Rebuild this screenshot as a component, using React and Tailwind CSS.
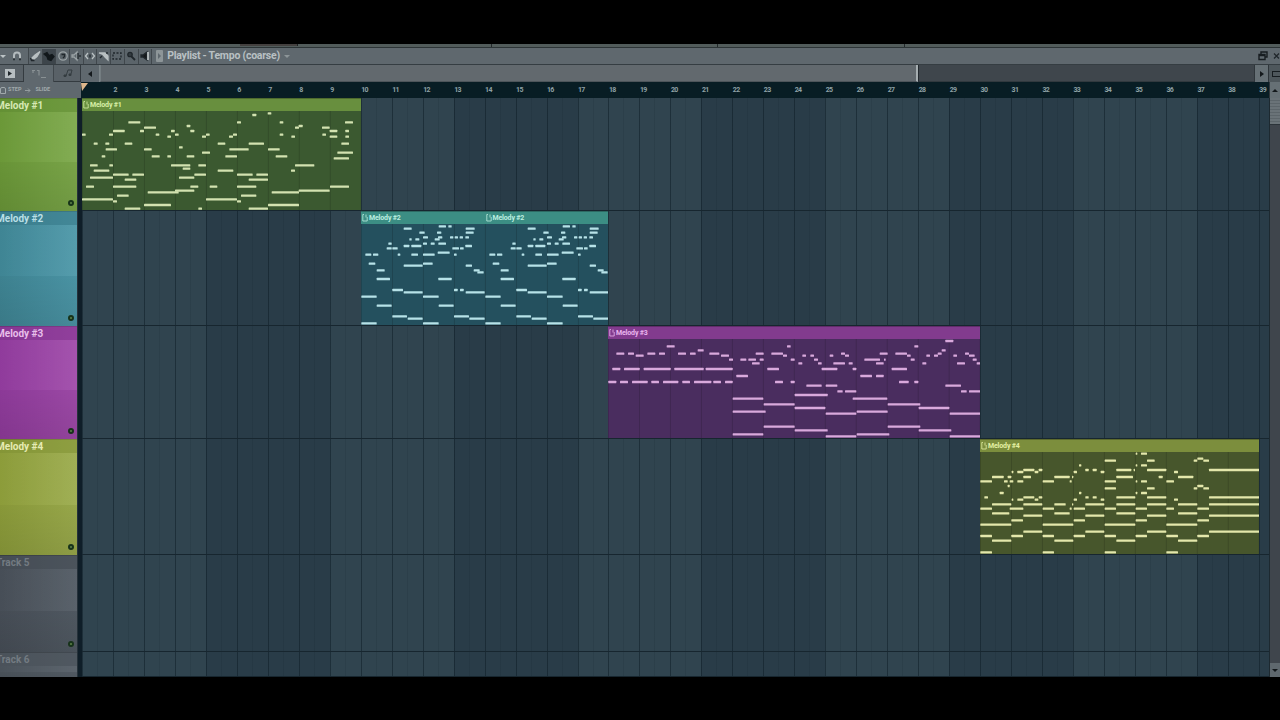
import { clsx } from 'clsx';

// Note rows are [y, start, end, start, end, ...] in thirds of a pixel
const MELODY_1 = [
  [52, 563, 574],
  [57, 517, 529],
  [79, 145, 181, 471, 483, 599, 610, 795, 819],
  [90, 320, 331, 656, 668],
  [95, 192, 228, 645, 657, 726, 749],
  [105, 99, 134, 180, 192, 273, 284, 331, 343, 749, 772, 796, 807],
  [116, 6, 17, 87, 99, 227, 238, 285, 296, 378, 389, 459, 471, 599, 610, 727, 738],
  [122, 262, 273, 366, 378, 447, 459, 634, 645, 749, 772, 796, 807],
  [143, 41, 53, 76, 88, 134, 157, 413, 436, 506, 552, 784, 807],
  [154, 297, 308],
  [160, 77, 111, 192, 215, 448, 506, 564, 599],
  [170, 366, 390, 772, 819],
  [181, 65, 76, 215, 239, 262, 273, 320, 343, 436, 471, 587, 622],
  [187, 761, 807],
  [208, 30, 53, 88, 99, 273, 331, 355, 378, 645, 703],
  [218, 308, 331],
  [224, 41, 88, 413, 460, 633, 645],
  [236, 99, 146, 157, 192, 343, 378, 471, 518, 529, 564],
  [245, 30, 99, 297, 343],
  [251, 134, 169, 506, 564],
  [272, 18, 42, 99, 169, 331, 355, 389, 412, 471, 529, 750, 807],
  [284, 285, 343, 656, 749],
  [289, 203, 296, 575, 657],
  [299, 111, 146, 483, 529],
  [310, 6, 99, 378, 471],
  [316, 99, 111, 471, 483],
  [327, 192, 273, 564, 657],
  [338, 134, 181, 355, 366, 506, 564],
];

const MELODY_2 = [
  [55, 242, 264, 271, 281],
  [62, 137, 161, 323, 350],
  [74, 184, 200, 237, 250, 323, 347],
  [88, 195, 210, 240, 253, 276, 286, 290, 300, 305, 315, 322, 333],
  [94, 154, 161, 172, 184, 230, 245],
  [107, 91, 101, 195, 207, 218, 230, 241, 264],
  [114, 137, 154, 160, 190, 322, 342],
  [121, 86, 101, 103, 119, 283, 303, 306, 317],
  [134, 239, 275],
  [140, 22, 40, 45, 61, 119, 127, 160, 180, 195, 230, 288, 296],
  [167, 32, 52, 195, 224],
  [173, 137, 194, 323, 342],
  [187, 56, 80, 347, 365],
  [193, 358, 377],
  [213, 56, 96, 241, 281],
  [246, 103, 135, 288, 299, 306, 317],
  [253, 137, 194, 323, 380],
  [266, 10, 56, 195, 242],
  [293, 56, 101, 242, 287],
  [325, 103, 147, 288, 333],
  [332, 149, 194, 334, 380],
  [346, 10, 56, 195, 242],
];

const MELODY_3 = [
  [57, 1024, 1048],
  [73, 188, 212, 549, 560, 931, 943],
  [85, 281, 299, 1013, 1025],
  [95, 37, 61, 72, 90, 130, 154, 165, 183, 222, 246, 258, 275, 316, 346, 455, 479, 502, 537, 711, 723, 827, 851, 874, 909, 1001, 1013, 1083, 1095],
  [101, 95, 119, 351, 375, 537, 549, 595, 606, 619, 630, 677, 688, 723, 735, 909, 920, 967, 978, 990, 1002, 1048, 1059, 1095, 1112],
  [113, 375, 387, 409, 427, 433, 456, 467, 479, 560, 572, 630, 642, 781, 828, 840, 845, 920, 932, 1106, 1118],
  [124, 444, 467, 583, 595, 642, 653, 688, 723, 734, 746, 816, 839, 955, 967, 1059, 1083, 1118, 1129],
  [141, 25, 49, 60, 107, 119, 200, 211, 299, 305, 386, 490, 525, 653, 700, 746, 757, 863, 909],
  [162, 397, 432, 769, 804, 816, 839],
  [180, 13, 37, 48, 72, 84, 131, 142, 165, 177, 223, 235, 258, 270, 322, 328, 351, 363, 386, 513, 537, 560, 572, 885, 914, 931, 943],
  [191, 607, 653, 665, 700, 1024, 1071],
  [208, 700, 716, 723, 757, 1071, 1088, 1095, 1129],
  [219, 572, 671],
  [230, 386, 478, 746, 850],
  [247, 479, 572, 851, 949],
  [258, 572, 664, 944, 1036],
  [269, 386, 485, 758, 851],
  [275, 665, 757, 1037, 1129],
  [314, 479, 572, 851, 949],
  [325, 572, 671, 944, 1042],
  [337, 386, 478, 758, 856],
  [343, 665, 757, 1037, 1129],
];

const MELODY_4 = [
  [53, 479, 484, 495, 513],
  [68, 664, 682],
  [74, 386, 420, 653, 664, 682, 699],
  [88, 309, 316, 479, 484, 495, 513],
  [74, 513, 536],
  [102, 142, 175, 188, 199, 328, 338, 350, 362, 421, 466, 473, 477, 513, 571, 699, 850],
  [108, 107, 112, 124, 142, 176, 187, 293, 303, 374, 385, 594, 606],
  [123, 48, 83, 95, 106, 142, 165, 235, 281, 288, 292, 421, 471, 548, 560, 606, 652],
  [136, 13, 48, 84, 95, 101, 112, 124, 142, 200, 234, 281, 287, 386, 420, 479, 484, 495, 513, 571, 594],
  [150, 95, 101],
  [157, 386, 420, 513, 536, 653, 664, 682, 699],
  [150, 664, 682],
  [171, 71, 83, 309, 316, 479, 484, 495, 513],
  [184, 25, 36, 142, 175, 188, 199, 328, 338, 350, 362, 421, 478, 513, 571, 699, 850],
  [191, 107, 112, 124, 142, 176, 187, 293, 303, 374, 385, 594, 606],
  [205, 48, 106, 142, 199, 235, 269, 288, 292, 328, 385, 421, 478, 513, 571, 606, 664, 699, 850],
  [218, 13, 48, 101, 142, 200, 234, 281, 287, 293, 327, 386, 420, 479, 513, 571, 594, 664, 699],
  [232, 48, 100, 235, 281, 421, 478, 606, 664],
  [239, 142, 199, 328, 385, 513, 571, 699, 850],
  [253, 106, 141, 293, 327, 479, 513, 664, 699],
  [266, 13, 106, 200, 292, 386, 478, 571, 664],
  [287, 142, 199, 328, 385, 513, 571, 699, 850],
  [300, 13, 48, 106, 141, 200, 234, 293, 327, 386, 420, 479, 513, 571, 606, 664, 699],
  [314, 48, 106, 235, 292, 421, 478, 606, 664],
  [349, 13, 48, 200, 234, 386, 420, 571, 606],
];

const tracks = [
  {
    name: 'Melody #1',
    height: 'h-[113px]',
    header: 'from-[#6b9838] to-[#7ca84a] text-[#d6e8b4]',
    light: 'bg-[#5b8530]',
    clips: [
      { label: 'Melody #1', className: 'w-[279px] ml-0', bar: 'bg-[#688f3e] text-[#d8efa8]', body: 'bg-[#3b5930] fill-[#d3e2b0]', viewBox: '6 45 837 297', notes: MELODY_1 },
    ],
  },
  {
    name: 'Melody #2',
    height: 'h-[115px]',
    header: 'from-[#3f8594] to-[#4c97a8] text-[#b9dfe6]',
    light: 'bg-[#35717f]',
    clips: [
      { label: 'Melody #2', className: 'w-[123.5px] ml-[279px]', bar: 'bg-[#3c8e84] text-[#bdeee0]', body: 'bg-[#24505e] fill-[#b7e2e8]', viewBox: '9 48 370.5 303', notes: MELODY_2 },
      { label: 'Melody #2', className: 'w-[123.5px] ml-0', bar: 'bg-[#3c8e84] text-[#bdeee0]', body: 'bg-[#24505e] fill-[#b7e2e8]', viewBox: '9 48 370.5 303', notes: MELODY_2 },
    ],
  },
  {
    name: 'Melody #3',
    height: 'h-[113px]',
    header: 'from-[#903b9c] to-[#9f4aa9] text-[#e8bfea]',
    light: 'bg-[#7b3087]',
    clips: [
      { label: 'Melody #3', className: 'w-[372px] ml-[526px]', bar: 'bg-[#823b8e] text-[#eab4ee]', body: 'bg-[#4a2d5f] fill-[#d9a9dc]', viewBox: '12 51 1116 297', notes: MELODY_3 },
    ],
  },
  {
    name: 'Melody #4',
    height: 'h-[116px]',
    header: 'from-[#8c9c3a] to-[#9bab4c] text-[#e6ebb4]',
    light: 'bg-[#7b8b33]',
    clips: [
      { label: 'Melody #4', className: 'w-[279px] ml-[898px]', bar: 'bg-[#7c8e3d] text-[#e4f0a4]', body: 'bg-[#47562c] fill-[#e4e7ab]', viewBox: '12 48 837 306', notes: MELODY_4 },
    ],
  },
  {
    name: 'Track 5',
    height: 'h-[97px]',
    header: 'from-[#474e57] to-[#515a63] text-[#737b82]',
    light: 'bg-[#434a52]',
    clips: [],
  },
  {
    name: 'Track 6',
    height: 'h-[25px]',
    header: 'from-[#4b535b] to-[#535c65] text-[#737b82]',
    light: 'bg-[#4b535b]',
    collapsed: true,
    clips: [],
  },
];

function Clip({ clip }) {
  return (
    <div className={clsx('flex flex-col shrink-0 h-full', clip.className)}>
      <div className={clsx('flex items-center gap-[1px] h-[13px] pl-[1px] border-t border-black/25 shrink-0', clip.bar)}>
        <svg className="w-[6px] h-[8px]" viewBox="0 0 6 8" fill="none" stroke="currentColor">
          <path d="M2 .5H.8V7h4.400V3M4 .5v3" strokeOpacity="0.8" />
        </svg>
        <span className="text-[7px] leading-none font-bold tracking-[-0.15px] whitespace-nowrap">{clip.label}</span>
      </div>
      <div className={clsx('flex-1 min-h-0 bg-[linear-gradient(90deg,rgba(0,0,0,0.15)_1px,transparent_1px)] bg-[length:30.97px_100%]', clip.body)}>
        <svg className="block w-full h-full" viewBox={clip.viewBox} preserveAspectRatio="none">
          {clip.notes.map(([y, ...spans], row) =>
            spans.map((start, i) =>
              i % 2 === 0 ? (
                <rect key={`${row}-${i}`} x={start} y={y - 3.5} width={spans[i + 1] - start} height="7" rx="1.5" />
              ) : null
            )
          )}
        </svg>
      </div>
    </div>
  );
}

function TrackHeader({ track }) {
  return (
    <div
      className={clsx(
        'relative w-[77px] shrink-0 overflow-hidden bg-gradient-to-r border-t border-black/20',
        track.height,
        track.header
      )}
    >
      <div className={clsx('h-[13px] opacity-40', track.light)} />
      <div className="h-[calc(50%-6px)] bg-gradient-to-r from-transparent to-white/5" />
      <div className="h-1/2 bg-gradient-to-b from-black/[0.03] to-black/10" />
      <span className="absolute left-[-4px] top-[1px] text-[10px] leading-[12px] font-bold whitespace-nowrap">
        {track.name}
      </span>
      {!track.collapsed && (
        <span className="absolute right-[3px] bottom-[5px] w-[6px] h-[6px] rounded-full border-2 border-[#17331a] bg-[#5d8348]" />
      )}
    </div>
  );
}

function ToolIcon({ active, children }) {
  return (
    <div className={clsx('flex items-center justify-center w-[13.7px] h-[15px] border-r border-[#40474c]', active ? 'bg-[#3d454b]' : 'bg-[#5b646a]')}>
      <svg className="w-[12px] h-[12px]" viewBox="0 0 12 12" fill="none" stroke="#20272c" strokeWidth="1.3">
        {children}
      </svg>
    </div>
  );
}

function TitleBar() {
  return (
    <div className="flex items-center h-[17px] bg-[#5f686e] border-b border-[#353d42] shrink-0">
      <div className="flex items-center w-[29px] h-full border-r border-[#40474c]">
        <span className="w-0 h-0 border-x-[3px] border-x-transparent border-t-[3px] border-t-[#bcc3c6]" />
        <svg className="w-[10px] h-[10px] ml-[6px]" viewBox="0 0 10 10" fill="none" stroke="#b3babd" strokeWidth="2">
          <path d="M2 9V4.5a3 3 0 0 1 6 0V9" />
          <path d="M1 8.2h2M7 8.2h2" stroke="#2b3237" />
        </svg>
      </div>
      <div className="flex items-center">
        <ToolIcon>
          <path d="M3 8l3-3 5-3.500-3 5L5 9z" fill="#b9c0c2" stroke="#b9c0c2" />
          <path d="M1.500 8l1 2.500h3" />
        </ToolIcon>
        <ToolIcon active>
          <path d="M1 4l3-1.500 2 3 3-1 2 2-3 4-3-1-1-3z" fill="#12181b" stroke="#12181b" />
        </ToolIcon>
        <ToolIcon>
          <circle cx="6" cy="6" r="4.200" stroke="#9aa2a5" />
          <path d="M4.500 4.500h3v2L6 8" />
        </ToolIcon>
        <ToolIcon>
          <path d="M2 5v2h2l3 3V2L4 5z" stroke="#9aa2a5" />
          <path d="M8 3v6M10 5v2" />
        </ToolIcon>
        <ToolIcon>
          <path d="M4 3L1.500 6 4 9M8 3l2.500 3L8 9" stroke="#b9c0c2" />
          <path d="M6 4.500v3" />
        </ToolIcon>
        <ToolIcon>
          <path d="M1 3h6l3 3v4L7 7 5 4.500z" fill="#b9c0c2" stroke="#b9c0c2" />
          <path d="M2 8l2-2M9 2v2" />
        </ToolIcon>
        <ToolIcon>
          <path d="M2 3h8v6H2z" strokeDasharray="2 1.500" />
        </ToolIcon>
        <ToolIcon>
          <circle cx="5" cy="4.500" r="2.200" fill="#343c41" />
          <path d="M6.500 6.500L10 10" strokeWidth="1.800" />
        </ToolIcon>
        <ToolIcon>
          <path d="M2 5v2h2l4 3V2L4 5z" fill="#15191c" />
          <path d="M9 2v8" stroke="#b9c0c2" strokeWidth="1.800" />
        </ToolIcon>
      </div>
      <div className="flex items-center justify-center w-[7px] h-[12px] ml-[4px] rounded-[1px] bg-[#8d9598]">
        <span className="w-0 h-0 border-y-[3px] border-y-transparent border-l-[3px] border-l-[#5f686e]" />
      </div>
      <span className="ml-[4px] text-[10.5px] leading-none font-bold tracking-[-0.23px] text-[#b9c0c3] whitespace-nowrap">
        Playlist - Tempo (coarse)
      </span>
      <span className="w-0 h-0 ml-[4px] border-x-[3px] border-x-transparent border-t-[3px] border-t-[#8d9598]" />
      <div className="flex items-center gap-[5px] ml-auto">
        <svg className="w-[10px] h-[10px]" viewBox="0 0 10 10" fill="none" stroke="#171d21" strokeWidth="1.400">
          <path d="M3 3V1h6v5H7M1 3.500h6v5H1zM1 4.500h6" />
        </svg>
        <svg className="w-[7px] h-[8px]" viewBox="0 0 7 8" stroke="#20272b" strokeWidth="1.300">
          <path d="M1 1.500l5 5M6 1.500l-5 5" />
        </svg>
      </div>
    </div>
  );
}

function ScrollRow() {
  return (
    <div className="flex h-[17px] shrink-0 bg-[#5f686e]">
      <div className="flex items-center justify-center w-[24px] border-r border-b border-[#343b40] bg-[#596167] pr-[3px]">
        <svg className="w-[10px] h-[9px]" viewBox="0 0 10 9">
          <path d="M0 0h10v9H0z" fill="#b7bec1" />
          <path d="M3 2l4 2.500L3 7z" fill="#20272b" />
        </svg>
      </div>
      <div className="flex items-center justify-center w-[30px] border-r border-[#40474c]">
        <svg className="w-[14px] h-[10px]" viewBox="0 0 14 10" fill="none" stroke="#899194" strokeWidth="1.200">
          <path d="M0 1.500h3M5 1.500h2v5M9 8.500h5M1 4v-2" />
        </svg>
      </div>
      <div className="flex items-center justify-center w-[27px] pl-[2px] border-r border-b border-[#343b40] bg-[#596167]">
        <svg className="w-[10px] h-[10px]" viewBox="0 0 10 10" fill="#353d41" stroke="#353d41">
          <path d="M3 8L5 2h4L8 6" fill="none" />
          <path d="M1 7h2v1.500H1zM6 6h2v1.500H6z" />
        </svg>
      </div>
      <div className="flex items-center justify-center w-[19px] border-r border-[#7c8589]">
        <span className="w-0 h-0 border-y-[3px] border-y-transparent border-r-[4px] border-r-[#14191c]" />
      </div>
      <div className="w-[818px] border-l border-[#747d81] bg-[#62696e] border-r-2 border-r-[#a5adb0] border-b border-b-[#4d555a]" />
      <div className="flex-1 border-l border-[#22292e] bg-[#3f464c] border-b border-b-[#31393e]" />
      <div className="flex items-center justify-center w-[15px] border-x border-[#2f363b] bg-[#667075]">
        <span className="w-0 h-0 border-y-[3px] border-y-transparent border-l-[4px] border-l-[#14191c]" />
      </div>
      <div className="flex items-center w-[11px] pl-[3px] overflow-hidden bg-[#4e575c]">
        <span className="w-[10px] h-[6px] shrink-0 border border-[#171d21]" />
      </div>
    </div>
  );
}

function Ruler() {
  return (
    <div className="flex h-[16px] shrink-0">
      <div className="flex items-center gap-[2px] w-[81px] shrink-0 bg-[#5f686e] text-[5.5px] leading-none font-bold text-[#a0a8ab]">
        <span className="w-[6px] h-[7px] border border-[#a0a8ab] rounded-t-[2px]" />
        <span>STEP</span>
        <svg className="w-[6px] h-[5px] mx-[2px]" viewBox="0 0 6 5" fill="none" stroke="#949c9f">
          <path d="M0 2.500h5M3 .5l2 2-2 2" />
        </svg>
        <span>SLIDE</span>
      </div>
      <div className="relative flex w-[1188px] overflow-hidden bg-[#081d24]">
        {Array.from({ length: 39 }, (_, i) => (
          <div key={i} className="w-[30.97px] shrink-0 pl-[1.5px] pt-[1px] text-[7px] leading-[15px] font-bold tracking-[-0.7px] text-[#8fa1a6]">
            {i > 0 && i + 1}
          </div>
        ))}
        <svg className="absolute left-0 top-[1px] w-[7px] h-[9px]" viewBox="0 0 7 9">
          <path d="M0 0h7L1 8z" fill="#dfb78c" />
        </svg>
      </div>
      <div className="flex items-center justify-center flex-1 bg-[#667075] border-l border-[#2f363b]">
        <span className="w-0 h-0 border-x-[3px] border-x-transparent border-b-[3px] border-b-[#14191c]" />
      </div>
    </div>
  );
}

export default function App() {
  return (
    <div className="flex flex-col w-[1280px] h-[720px] pt-[44px] pb-[43px] bg-black overflow-hidden font-['Roboto','Liberation_Sans',sans-serif]">
      <div className="flex h-[4px] shrink-0 bg-[#525c5b] border-b border-[#2c3436]">
        <div className="w-[240px]" />
        <div className="w-[58px] h-[2px] bg-[#43403f] border-r border-[#1d2123]" />
        <div className="w-[194px] border-r border-[#23292b]" />
        <div className="w-[226px] border-r border-[#23292b]" />
        <div className="w-[187px] border-r border-[#23292b]" />
      </div>
      <TitleBar />
      <ScrollRow />
      <Ruler />
      <div className="flex flex-1 min-h-0 overflow-hidden">
        <div className="flex flex-col shrink-0">
          {tracks.map((track) => (
            <TrackHeader key={track.name} track={track} />
          ))}
        </div>
        <div className="w-[5px] shrink-0 bg-[#0f1e28] border-l border-[#26323a]" />

        {/* Four-bar shading with a line on every bar and a fainter one on the half bar */}
        <div className="flex flex-col w-[1187px] shrink-0 bg-[repeating-linear-gradient(90deg,rgba(12,27,36,0.5)_0px,rgba(12,27,36,0.5)_1px,transparent_1px,transparent_15px,rgba(12,27,36,0.12)_15px,rgba(12,27,36,0.12)_16px,transparent_16px,transparent_30.97px),repeating-linear-gradient(90deg,#30444f_0px,#30444f_123.88px,#293c48_123.88px,#293c48_247.76px)]">
          {tracks.map((track) => (
            <div key={track.name} className={clsx('flex shrink-0 border-b border-[#17262f]', track.height)}>
              {track.clips.map((clip, i) => (
                <Clip key={i} clip={clip} />
              ))}
            </div>
          ))}
        </div>

        <div className="flex flex-col flex-1 bg-[#3f454c] border-l border-[#1d2930]">
          <div className="h-[27px] bg-[repeating-linear-gradient(180deg,#6a7378_0px,#6a7378_2px,#5c656a_2px,#5c656a_3px)] border-b border-[#2c343a]" />
          <div className="flex items-center justify-center h-[14px] mt-auto bg-[#5f686e]">
            <span className="w-0 h-0 border-x-[3px] border-x-transparent border-t-[3px] border-t-[#14191c]" />
          </div>
        </div>
      </div>
    </div>
  );
}
